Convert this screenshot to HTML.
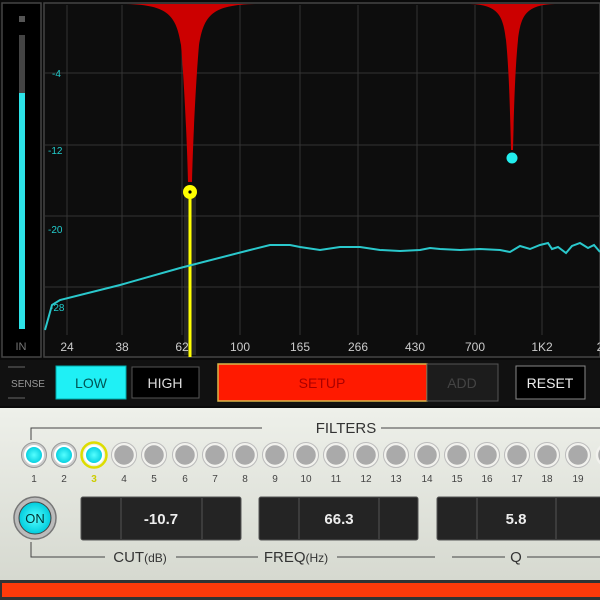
<!DOCTYPE html>
<html><head><style>
html,body{margin:0;padding:0;width:600px;height:600px;overflow:hidden;background:#dfe2da;font-family:"Liberation Sans",sans-serif}
</style></head><body>
<svg width="600" height="600" viewBox="0 0 600 600" xmlns="http://www.w3.org/2000/svg" style="position:absolute;left:0;top:0">
<defs>
<linearGradient id="pg" x1="0" y1="0" x2="0" y2="1"><stop offset="0" stop-color="#eef0ea"/><stop offset="1" stop-color="#d6d9d0"/></linearGradient>
<radialGradient id="cy"><stop offset="0" stop-color="#5ff"/><stop offset="1" stop-color="#0cd"/></radialGradient>
</defs>
<rect x="0" y="0" width="600" height="408" fill="#0a0a0a"/>
<rect x="0" y="408" width="600" height="172" fill="url(#pg)"/>
<rect x="0" y="580" width="600" height="20" fill="#333"/>
<rect x="2" y="583" width="598" height="14" fill="#ff3a0a"/>
<rect x="2" y="3" width="39" height="354" fill="#000" stroke="#444" stroke-width="1.5"/>
<rect x="19" y="16" width="6" height="6" fill="#555"/>
<rect x="19" y="35" width="6" height="58" fill="#444"/>
<rect x="19" y="93" width="6" height="236" fill="#2de3e8"/>
<text x="21" y="350" font-size="11" fill="#777" text-anchor="middle">IN</text>
<rect x="44" y="3" width="556" height="354" fill="#0d0d0d" stroke="#444" stroke-width="1.5"/>
<g stroke="#333" stroke-width="1">
<line x1="67" y1="5" x2="67" y2="335"/><line x1="122" y1="5" x2="122" y2="335"/><line x1="182" y1="5" x2="182" y2="335"/><line x1="240" y1="5" x2="240" y2="335"/><line x1="300" y1="5" x2="300" y2="335"/><line x1="358" y1="5" x2="358" y2="335"/><line x1="417" y1="5" x2="417" y2="335"/><line x1="475" y1="5" x2="475" y2="335"/><line x1="542" y1="5" x2="542" y2="335"/>
<line x1="45" y1="73" x2="600" y2="73"/><line x1="45" y1="145" x2="600" y2="145"/><line x1="45" y1="216" x2="600" y2="216"/><line x1="45" y1="287" x2="600" y2="287"/>
</g>
<g font-size="10" fill="#2cc" >
<text x="52" y="77">-4</text><text x="48" y="154">-12</text><text x="48" y="233">-20</text><text x="50" y="311">-28</text>
</g>
<path d="M125,4 C168,5 176,15 181,45 C184,80 187,140 188,182 L192,182 C193,140 196,80 199,45 C204,15 212,5 255,4 Z" fill="#c00"/>
<path d="M470,4 C498,5 503,15 506,40 C509,70 510,110 511,150 L513,150 C514,110 515,70 518,40 C521,15 526,5 555,4 Z" fill="#c00"/>
<rect x="184" y="195" width="12" height="160" fill="#333" opacity="0.6"/>
<line x1="190" y1="195" x2="190" y2="357" stroke="#ff0" stroke-width="3"/>
<polyline fill="none" stroke="#2ac8cc" stroke-width="2" points="45,330 52,305 60,300 120,285 180,268 250,250 270,245 290,245 300,247 320,250 340,247 360,247 380,250 400,251 420,250 430,248 440,249 460,250 480,249 500,250 510,252 520,246 530,249 540,245 548,243 552,249 558,247 566,253 572,246 580,243 588,248 594,245 600,252"/>
<circle cx="190" cy="192" r="7" fill="#ff0"/><circle cx="190" cy="192" r="1.6" fill="#000"/>
<circle cx="512" cy="158" r="5.5" fill="#2ee"/>
<g font-size="12" fill="#ccc" text-anchor="middle">
<text x="67" y="351">24</text><text x="122" y="351">38</text><text x="182" y="351">62</text><text x="240" y="351">100</text><text x="300" y="351">165</text><text x="358" y="351">266</text><text x="415" y="351">430</text><text x="475" y="351">700</text><text x="542" y="351">1K2</text><text x="600" y="351">2</text>
</g>
<rect x="0" y="360" width="600" height="46" fill="#111"/>
<path d="M25,367 H8 M25,398 H8" stroke="#666"/>
<text x="28" y="387" font-size="10" fill="#999" text-anchor="middle">SENSE</text>
<rect x="56" y="366" width="70" height="33" fill="#1ff0f5" stroke="#0aa" />
<text x="91" y="388" font-size="14" fill="#055" text-anchor="middle">LOW</text>
<rect x="132" y="367" width="67" height="31" fill="#000" stroke="#555"/>
<text x="165" y="388" font-size="14" fill="#ddd" text-anchor="middle">HIGH</text>
<rect x="218" y="364" width="217" height="37" fill="#262626" stroke="#555"/>
<rect x="218" y="364" width="209" height="37" fill="#ff1a00" stroke="#d9b84a" stroke-width="1.5"/>
<text x="322" y="388" font-size="14" fill="#a00" text-anchor="middle">SETUP</text>
<rect x="427" y="364" width="71" height="37" fill="#1c1c1c" stroke="#555"/>
<text x="462" y="388" font-size="14" fill="#444" text-anchor="middle">ADD</text>
<rect x="516" y="366" width="69" height="33" fill="#000" stroke="#888"/>
<text x="550" y="388" font-size="14" fill="#eee" text-anchor="middle">RESET</text>
<path d="M31,440 V428 H262 M381,428 H600" stroke="#444" fill="none"/>
<text x="346" y="433" font-size="15" fill="#333" text-anchor="middle">FILTERS</text>
<circle cx="34" cy="455" r="12.5" fill="#ccc" stroke="#999"/><circle cx="34" cy="455" r="9" fill="url(#cy)" stroke="#fff" stroke-width="2"/>
<circle cx="64" cy="455" r="12.5" fill="#ccc" stroke="#999"/><circle cx="64" cy="455" r="9" fill="url(#cy)" stroke="#fff" stroke-width="2"/>
<circle cx="94" cy="455" r="12.5" fill="#eed" stroke="#dd0" stroke-width="2.5"/><circle cx="94" cy="455" r="9" fill="url(#cy)" stroke="#fff" stroke-width="2"/>
<g fill="#aaa" stroke="#f2f2ee" stroke-width="2.5">
<circle cx="124" cy="455" r="11"/><circle cx="154" cy="455" r="11"/><circle cx="185" cy="455" r="11"/><circle cx="215" cy="455" r="11"/><circle cx="245" cy="455" r="11"/><circle cx="275" cy="455" r="11"/><circle cx="306" cy="455" r="11"/><circle cx="336" cy="455" r="11"/><circle cx="366" cy="455" r="11"/><circle cx="396" cy="455" r="11"/><circle cx="427" cy="455" r="11"/><circle cx="457" cy="455" r="11"/><circle cx="487" cy="455" r="11"/><circle cx="517" cy="455" r="11"/><circle cx="547" cy="455" r="11"/><circle cx="578" cy="455" r="11"/><circle cx="608" cy="455" r="11"/>
</g>
<g fill="none" stroke="#bbb" stroke-width="1">
<circle cx="124" cy="455" r="12.5"/><circle cx="154" cy="455" r="12.5"/><circle cx="185" cy="455" r="12.5"/><circle cx="215" cy="455" r="12.5"/><circle cx="245" cy="455" r="12.5"/><circle cx="275" cy="455" r="12.5"/><circle cx="306" cy="455" r="12.5"/><circle cx="336" cy="455" r="12.5"/><circle cx="366" cy="455" r="12.5"/><circle cx="396" cy="455" r="12.5"/><circle cx="427" cy="455" r="12.5"/><circle cx="457" cy="455" r="12.5"/><circle cx="487" cy="455" r="12.5"/><circle cx="517" cy="455" r="12.5"/><circle cx="547" cy="455" r="12.5"/><circle cx="578" cy="455" r="12.5"/>
</g>
<g font-size="10" fill="#444" text-anchor="middle">
<text x="34" y="482">1</text><text x="64" y="482">2</text><text x="94" y="482" fill="#cc0" font-weight="bold">3</text><text x="124" y="482">4</text><text x="154" y="482">5</text><text x="185" y="482">6</text><text x="215" y="482">7</text><text x="245" y="482">8</text><text x="275" y="482">9</text><text x="306" y="482">10</text><text x="336" y="482">11</text><text x="366" y="482">12</text><text x="396" y="482">13</text><text x="427" y="482">14</text><text x="457" y="482">15</text><text x="487" y="482">16</text><text x="517" y="482">17</text><text x="547" y="482">18</text><text x="578" y="482">19</text>
</g>
<circle cx="35" cy="518" r="21" fill="#bbb" stroke="#777" stroke-width="1.5"/>
<circle cx="35" cy="518" r="16" fill="url(#cy)" stroke="#444" stroke-width="1"/>
<text x="35" y="523" font-size="13" fill="#033" text-anchor="middle">ON</text>
<g stroke="#555" stroke-width="1">
<rect x="81" y="497" width="160" height="43" rx="2" fill="#242424"/><line x1="121" y1="498" x2="121" y2="539"/><line x1="202" y1="498" x2="202" y2="539"/>
<rect x="259" y="497" width="159" height="43" rx="2" fill="#242424"/><line x1="299" y1="498" x2="299" y2="539"/><line x1="379" y1="498" x2="379" y2="539"/>
<rect x="437" y="497" width="170" height="43" rx="2" fill="#242424"/><line x1="477" y1="498" x2="477" y2="539"/><line x1="556" y1="498" x2="556" y2="539"/>
</g>
<g font-size="15" fill="#eee" text-anchor="middle" font-weight="bold">
<text x="161" y="524">-10.7</text><text x="339" y="524">66.3</text><text x="516" y="524">5.8</text>
</g>
<path d="M31,542 V557 H105 M176,557 H258 M337,557 H435 M452,557 H505 M527,557 H600" stroke="#444" fill="none"/>
<text x="140" y="562" font-size="15" fill="#333" text-anchor="middle">CUT<tspan font-size="12">(dB)</tspan></text>
<text x="296" y="562" font-size="15" fill="#333" text-anchor="middle">FREQ<tspan font-size="12">(Hz)</tspan></text>
<text x="516" y="562" font-size="15" fill="#333" text-anchor="middle">Q</text>
</svg>
</body></html>
